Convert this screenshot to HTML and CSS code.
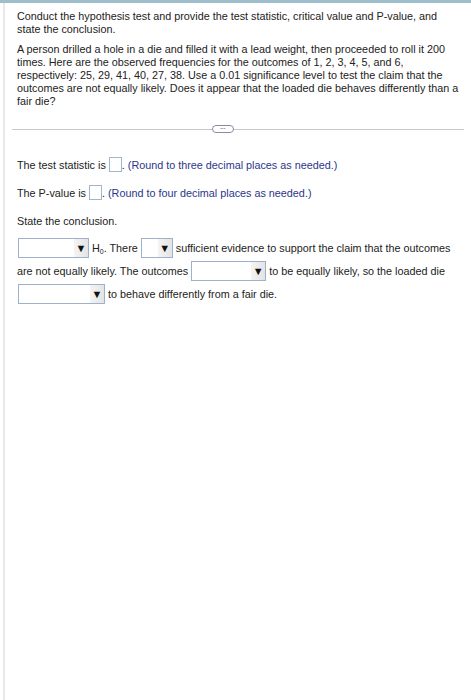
FILE: index.html
```html
<!DOCTYPE html>
<html>
<head>
<meta charset="utf-8">
<link rel="stylesheet" href="styles.css">
</head>
<body>
<div class="topbar"></div>
<div class="page">
  <div class="content">
    <p class="q">Conduct the hypothesis test and provide the test statistic, critical value and P-value, and state the conclusion.</p>
    <p class="q">A person drilled a hole in a die and filled it with a lead weight, then proceeded to roll it 200 times. Here are the observed frequencies for the outcomes of 1, 2, 3, 4, 5, and 6, respectively: 25, 29, 41, 40, 27, 38. Use a 0.01 significance level to test the claim that the outcomes are not equally likely. Does it appear that the loaded die behaves differently than a fair die?</p>
    <div class="sep"><span class="more">&#8226;&#8226;&#8226;</span></div>
    <p class="ans first">The test statistic is <span class="box"></span>. <span class="hint">(Round to three decimal places as needed.)</span></p>
    <p class="ans">The P-value is <span class="box"></span>. <span class="hint">(Round to four decimal places as needed.)</span></p>
    <p class="ans">State the conclusion.</p>
    <p class="concl"><span class="dd w1"><span class="arr">&#9660;</span></span> H<sub>0</sub>. There <span class="dd w2"><span class="arr">&#9660;</span></span> sufficient evidence to support the claim that the outcomes are not equally likely. The outcomes <span class="dd w3"><span class="arr">&#9660;</span></span> to be equally likely, so the loaded die <span class="dd w4"><span class="arr">&#9660;</span></span> to behave differently from a fair die.</p>
  </div>
</div>
</body>
</html>
```

FILE: styles.css
```css
html, body {
  margin: 0;
  padding: 0;
  background: #ffffff;
}
body {
  font-family: "Liberation Sans", Arial, sans-serif;
  font-size: 10.8px;
  color: #222222;
}
.topbar {
  height: 3px;
  background: #9fbecb;
}
.page {
  margin-left: 3px;
  border-left: 2px solid #e8e8e8;
  min-height: 697px;
}
.content {
  padding: 7px 10px 0 12px;
}
.q {
  margin: 0 0 7px 0;
  line-height: 13px;
}
.sep {
  margin: 21px -3px 0 -5px;
  height: 1px;
  background: #c8c8c8;
  position: relative;
}
.more {
  position: absolute;
  left: 200px;
  top: -4px;
  width: 20px;
  height: 6px;
  border: 1px solid #8a8aa8;
  border-radius: 5px;
  background: #ffffff;
  font-size: 4px;
  line-height: 6px;
  text-align: center;
  color: #6a6a8a;
  letter-spacing: 0.5px;
}
.ans {
  margin: 0;
  line-height: 14px;
}
.ans.first { margin-top: 28px; }
.ans + .ans { margin-top: 14px; }
.box {
  display: inline-block;
  width: 11px;
  height: 13px;
  border: 1px solid #9fb6d0;
  vertical-align: middle;
  margin-top: -3px;
}
.hint {
  color: #2b3689;
}
sub {
  font-size: 7px;
  line-height: 0;
  vertical-align: -2px;
}
.concl {
  margin: 9px 0 0 0;
  line-height: 23px;
}
.dd {
  display: inline-block;
  border: 1px solid #9fb0cc;
  vertical-align: middle;
  position: relative;
  box-sizing: border-box;
  height: 20px;
  margin-top: -2px;
  background: #fff;
}
.arr {
  position: absolute;
  right: 0;
  top: 0;
  bottom: 0;
  width: 14px;
  background: linear-gradient(to right, #f4f4f4, #e4e4e4);
  font-size: 11px;
  line-height: 18px;
  text-align: center;
  color: #111;
}
.w1 { width: 71px; margin-left: 1px; }
.w2 { width: 32px; }
.w3 { width: 75px; }
.w4 { width: 87px; margin-left: 1px; }
```
